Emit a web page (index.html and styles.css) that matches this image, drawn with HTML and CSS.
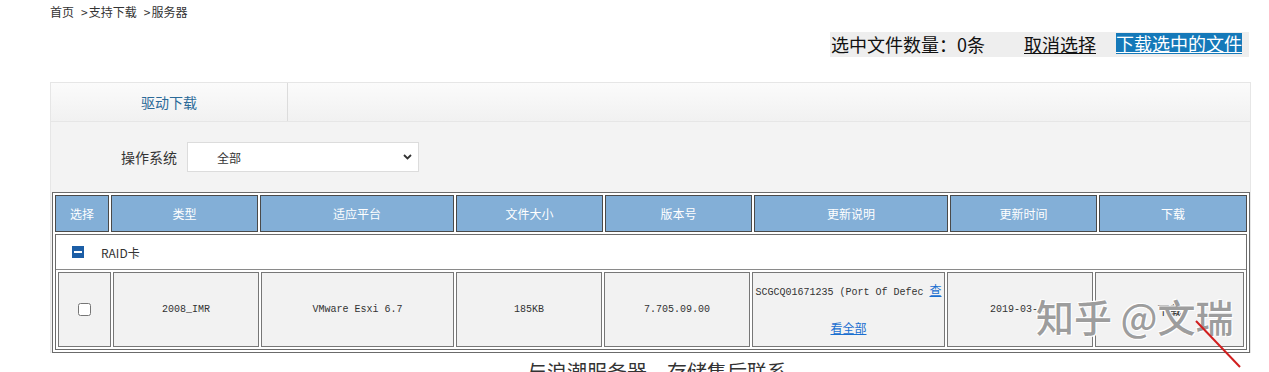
FILE: index.html
```html
<!DOCTYPE html>
<html lang="zh-CN">
<head>
<meta charset="utf-8">
<title>服务器 - 支持下载</title>
<link rel="stylesheet" href="styles.css">
</head>
<body>
<div class="crumb"><span>首页</span><span class="sep">&gt;</span><span>支持下载</span><span class="sep">&gt;</span><span>服务器</span></div>

<div class="toolbar-row">
  <div class="toolbar">
    <span class="count">选中文件数量：0条</span>
    <a class="cancel">取消选择</a>
    <a class="dl-selected">下载选中的文件</a>
  </div>
</div>

<div class="panel">
  <div class="tabs">
    <div class="tab">驱动下载</div>
  </div>
  <div class="filter">
    <span class="filter-label">操作系统</span>
    <div class="select">
      <span>全部</span>
      <svg class="chev" width="9" height="6" viewBox="0 0 9 6"><polyline points="1,1 4.5,4.5 8,1" fill="none" stroke="#333" stroke-width="1.8"/></svg>
    </div>
  </div>
  <div class="table">
    <div class="thead">
      <div>选择</div><div>类型</div><div>适应平台</div><div>文件大小</div><div>版本号</div><div>更新说明</div><div>更新时间</div><div>下载</div>
    </div>
    <div class="group">
      <div class="group-title"><span class="minus"></span><span>RAID卡</span></div>
      <div class="row">
        <div><input type="checkbox" class="chk"></div>
        <div>2008_IMR</div>
        <div>VMware Esxi 6.7</div>
        <div>185KB</div>
        <div>7.705.09.00</div>
        <div class="desc"><div class="desc-text">SCGCQ01671235 (Port Of Defec <a class="more">查看全部</a></div></div>
        <div>2019-03-27</div>
        <div class="dl-cell">下载</div>
      </div>
    </div>
  </div>
</div>

<div class="note">与浪潮服务器，存储售后联系</div>

<div class="watermark">知乎 @文瑞</div>
<svg class="arrow" width="60" height="60" viewBox="0 0 60 60"><line x1="4" y1="6" x2="48" y2="52" stroke="#d11f1f" stroke-width="2"/></svg>
</body>
</html>
```

FILE: styles.css
```css
html, body {
  margin: 0;
  padding: 0;
}
body {
  width: 1269px;
  height: 372px;
  overflow: hidden;
  position: relative;
  background: #fff;
  color: #333;
  font-family: "Noto Sans CJK SC", "Microsoft YaHei", sans-serif;
}

.crumb {
  display: flex;
  padding: 4px 0 0 50px;
  font-size: 12px;
  line-height: 16px;
  color: #333;
}
.sep {
  margin: 0 1px 0 7px;
}

.toolbar-row {
  display: flex;
  justify-content: flex-end;
  padding-right: 20px;
  margin-top: 12px;
}
.toolbar {
  display: flex;
  align-items: flex-start;
  background: #eeeeee;
  height: 25px;
  padding: 0 7px 0 1px;
  font-size: 18px;
  line-height: 24px;
  color: #111;
}
.count {
  margin-right: 39px;
}
.cancel {
  margin-right: 20px;
  text-decoration: underline;
  color: #111;
}
.dl-selected {
  margin-top: 1px;
  line-height: 21px;
  height: 21px;
  background: #1579b9;
  color: #fff;
  text-decoration: underline;
}

.panel {
  margin: 25px 0 0 50px;
  width: 1201px;
  box-sizing: border-box;
  border: 1px solid #e6e6e6;
  border-bottom: none;
  background: #f3f3f3;
}
.tabs {
  display: flex;
  height: 38px;
  border-bottom: 1px solid #e6e6e6;
  background: linear-gradient(#fbfbfb, #f1f1f1);
}
.tab {
  width: 236px;
  border-right: 1px solid #dcdcdc;
  display: flex;
  align-items: center;
  justify-content: center;
  font-size: 14px;
  color: #2b6a98;
}

.filter {
  display: flex;
  align-items: center;
  padding: 20px 0 20px 70px;
}
.filter-label {
  font-size: 14px;
  color: #333;
  margin-right: 10px;
}
.select {
  width: 232px;
  height: 30px;
  box-sizing: border-box;
  border: 1px solid #dcdcdc;
  background: #fff;
  display: flex;
  align-items: center;
  justify-content: space-between;
  padding: 0 6px 0 29px;
  font-size: 12px;
  color: #333;
}

.table {
  margin-left: 1px;
  width: 1198px;
  box-sizing: border-box;
  border: 1px solid #6b6b6b;
  padding: 2px;
  background: #fff;
  display: flex;
  flex-direction: column;
  gap: 2px;
}
.thead {
  display: grid;
  grid-template-columns: 54px 147px 194px 147px 147px 194px 147px 148px;
  column-gap: 2px;
}
.thead > div {
  height: 37px;
  box-sizing: border-box;
  border: 1px solid #4a4a4a;
  background: #83afd7;
  color: #fff;
  font-size: 12px;
  display: flex;
  align-items: center;
  justify-content: center;
}

.group {
  border: 1px solid #6b6b6b;
  background: #fff;
}
.group-title {
  height: 34px;
  border-bottom: 1px solid #8a8a8a;
  display: flex;
  align-items: center;
  padding-left: 16px;
  font-size: 12px;
  color: #333;
}
.minus {
  position: relative;
  width: 12px;
  height: 12px;
  background: #1c5ea6;
  margin-right: 17px;
}
.minus::after {
  content: "";
  position: absolute;
  left: 2px;
  right: 2px;
  top: 5px;
  height: 2px;
  background: #fff;
}

.row {
  display: grid;
  grid-template-columns: 53px 146px 193px 146px 146px 193px 146px 149px;
  gap: 2px;
  padding: 2px;
}
.row > div {
  height: 75px;
  box-sizing: border-box;
  border: 1px solid #777;
  background: #f2f2f2;
  display: flex;
  align-items: center;
  justify-content: center;
  font-family: "Liberation Mono", "Noto Sans CJK SC", monospace;
  font-size: 10px;
  color: #333;
}
.chk {
  margin: 0;
  width: 13px;
  height: 13px;
}
.desc-text {
  width: 100%;
  text-align: center;
  line-height: 35px;
}
.more {
  font-family: "Noto Sans CJK SC", sans-serif;
  font-size: 12px;
  color: #1a6fd0;
  text-decoration: underline;
}
.row > .dl-cell {
  font-family: "Noto Sans CJK SC", sans-serif;
  font-size: 12px;
}

.note {
  margin-top: 6px;
  padding-left: 527px;
  font-size: 20px;
  line-height: 26px;
  color: #333;
}

.watermark {
  position: absolute;
  left: 1036px;
  top: 294px;
  font-size: 38px;
  line-height: 44px;
  font-weight: 500;
  color: rgba(140, 140, 140, 0.85);
  text-shadow: 0 0 2px #fff, 0 0 2px #fff, 1px 1px 0 #fff, -1px -1px 0 #fff;
  white-space: nowrap;
}
.arrow {
  position: absolute;
  left: 1192px;
  top: 315px;
}
```
